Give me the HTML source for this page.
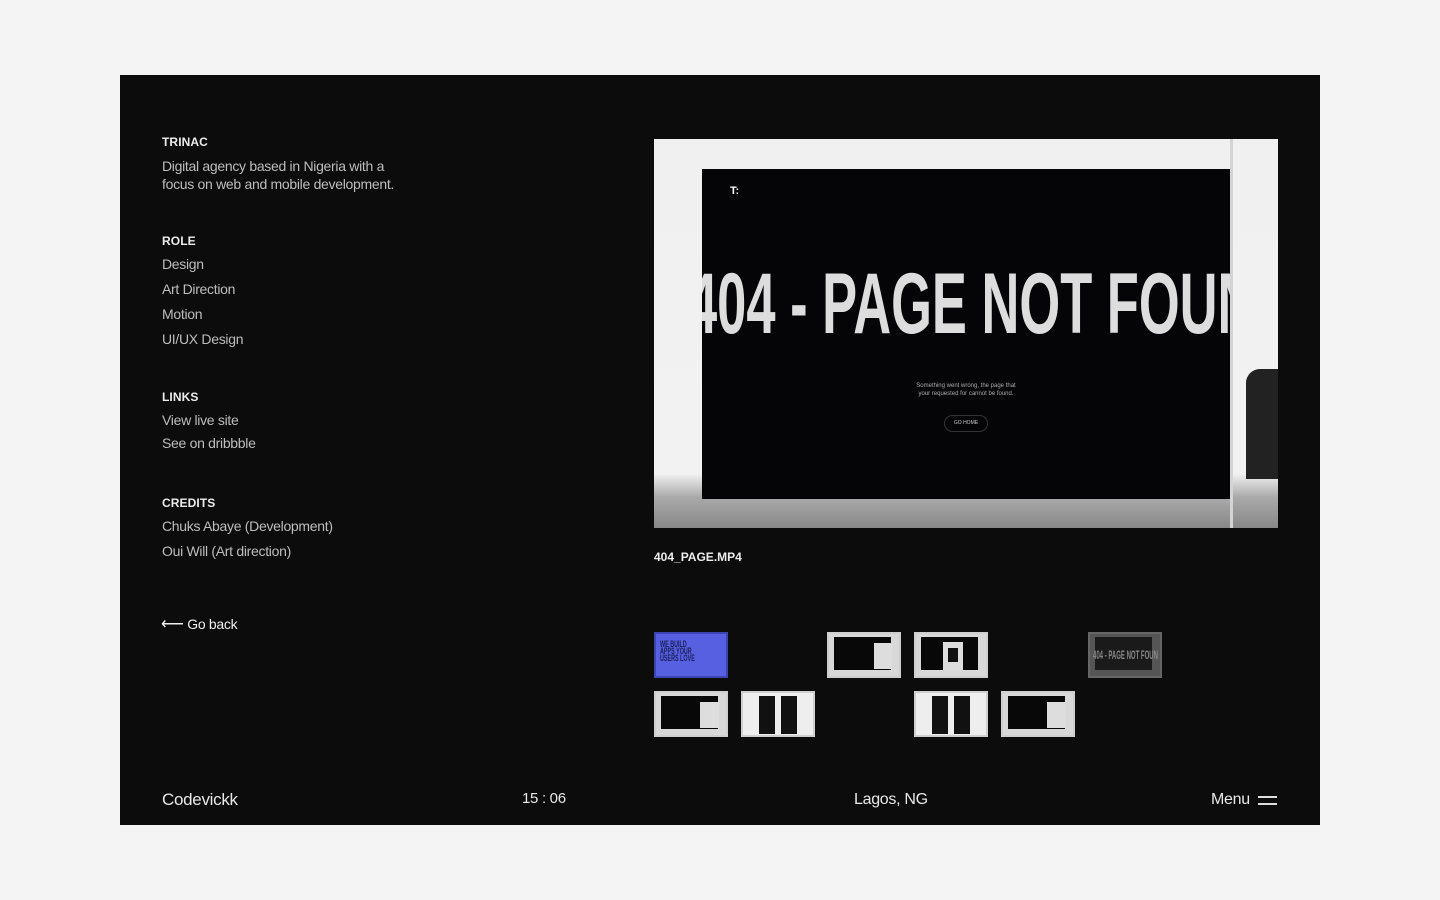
<!DOCTYPE html>
<html><head><meta charset="utf-8"><style>
*{margin:0;padding:0;box-sizing:border-box}
body{width:1440px;height:900px;background:#f4f4f4;font-family:"Liberation Sans",sans-serif;position:relative;overflow:hidden}
.panel{position:absolute;left:120px;top:75px;width:1200px;height:750px;background:#0c0c0c}
.a{position:absolute;white-space:nowrap}
.h{font-size:12px;font-weight:bold;color:#ececec;letter-spacing:0.1px}
.t{font-size:14px;color:#bdbdbd;letter-spacing:-0.3px}
.f{font-size:16px;color:#e8e8e8;letter-spacing:-0.3px}
.th{position:absolute;width:74px;height:46px;border:2px solid #cfcfcf;background:#d8d8d8;overflow:hidden}
.th .in{position:absolute;left:5px;top:3px;right:8px;bottom:6px;background:#080808}
.cond{display:inline-block;transform-origin:left;font-weight:bold;color:#ddd;line-height:0.9}
</style></head><body>
<div class="panel"></div>
<div class="a h" style="left:162px;top:135px">TRINAC</div>
<div class="a t" style="left:162px;top:157px;line-height:18px">Digital agency based in Nigeria with a<br>focus on web and mobile development.</div>
<div class="a h" style="left:162px;top:234px">ROLE</div>
<div class="a t" style="left:162px;top:256px">Design</div>
<div class="a t" style="left:162px;top:281px">Art Direction</div>
<div class="a t" style="left:162px;top:306px">Motion</div>
<div class="a t" style="left:162px;top:331px">UI/UX Design</div>
<div class="a h" style="left:162px;top:390px">LINKS</div>
<div class="a t" style="left:162px;top:412px">View live site</div>
<div class="a t" style="left:162px;top:435px">See on dribbble</div>
<div class="a h" style="left:162px;top:496px">CREDITS</div>
<div class="a t" style="left:162px;top:518px">Chuks Abaye (Development)</div>
<div class="a t" style="left:162px;top:543px">Oui Will (Art direction)</div>
<div class="a" style="left:161px;top:614px;font-size:14px;color:#eee;letter-spacing:-0.3px"><span style="font-size:16px">⟵</span> Go back</div>

<div class="a" style="left:654px;top:139px;width:624px;height:389px;background:linear-gradient(#f0f0f0 0,#f2f2f2 86%,#aaa 92%,#888 100%);overflow:hidden">
 <div style="position:absolute;left:576px;top:0;width:3px;height:389px;background:#d4d4d4"></div>
 <div style="position:absolute;left:592px;top:230px;width:32px;height:110px;background:#222;border-radius:14px 0 0 0"></div>
 <div style="position:absolute;left:48px;top:30px;width:528px;height:330px;background:#050508;overflow:hidden">
  <div style="position:absolute;left:28px;top:16px;color:#fff;font-weight:bold;font-size:11px">T:</div>
  <div style="position:absolute;left:-14px;top:86px;font-size:86px;white-space:nowrap"><span class="cond" style="transform:scaleX(0.61)">404 - PAGE NOT FOUND</span></div>
  <div style="position:absolute;left:0;width:528px;top:213px;text-align:center;font-size:6px;color:#aaa;line-height:8px">Something went wrong, the page that<br>your requested for cannot be found.</div>
  <div style="position:absolute;left:242px;top:246px;width:44px;height:17px;border:1px solid #333;border-radius:9px;font-size:5px;color:#ccc;text-align:center;line-height:15px">GO HOME</div>
 </div>
</div>
<div class="a" style="left:654px;top:550px;font-size:12px;font-weight:bold;color:#eee;letter-spacing:0px">404_PAGE.MP4</div>

<div class="th" style="left:654px;top:632px;background:#5660e0;border-color:#3b44b0"><div style="position:absolute;left:4px;top:7px;font-size:9px;font-weight:bold;color:#1a1f5a;line-height:7px;transform:scaleX(.6);transform-origin:left">WE BUILD<br>APPS YOUR<br>USERS LOVE</div></div>
<div class="th" style="left:827px;top:632px"><div class="in"></div><div style="position:absolute;left:45px;top:9px;width:18px;height:26px;background:#ddd"></div></div>
<div class="th" style="left:914px;top:632px"><div class="in"></div><div style="position:absolute;left:27px;top:8px;width:20px;height:28px;background:#ddd"></div><div style="position:absolute;left:32px;top:14px;width:10px;height:14px;background:#111"></div></div>
<div class="th" style="left:1088px;top:632px;background:#555;border-color:#666"><div class="in" style="background:#1a1a1a"></div><div style="position:absolute;left:3px;top:14px;font-size:12px;color:#888;font-weight:bold;transform:scaleX(.5);transform-origin:left;white-space:nowrap">404 - PAGE NOT FOUN</div></div>
<div class="th" style="left:654px;top:691px"><div class="in"></div><div style="position:absolute;left:44px;top:9px;width:19px;height:26px;background:#ddd"></div></div>
<div class="th" style="left:741px;top:691px;background:#eee"><div style="position:absolute;left:16px;top:3px;width:16px;height:38px;background:#111"></div><div style="position:absolute;left:38px;top:3px;width:16px;height:38px;background:#111"></div></div>
<div class="th" style="left:914px;top:691px;background:#eee"><div style="position:absolute;left:16px;top:3px;width:16px;height:38px;background:#111"></div><div style="position:absolute;left:38px;top:3px;width:16px;height:38px;background:#111"></div></div>
<div class="th" style="left:1001px;top:691px"><div class="in"></div><div style="position:absolute;left:44px;top:9px;width:19px;height:26px;background:#ddd"></div></div>

<div class="a f" style="left:162px;top:790px;font-size:17px">Codevickk</div>
<div class="a f" style="left:522px;top:790px;font-size:15px">15 : 06</div>
<div class="a f" style="left:854px;top:791px">Lagos, NG</div>
<div class="a f" style="left:1211px;top:791px">Menu</div>
<div class="a" style="left:1258px;top:796px;width:19px;height:1.5px;background:#ddd"></div>
<div class="a" style="left:1258px;top:803px;width:19px;height:1.5px;background:#ddd"></div>
</body></html>
